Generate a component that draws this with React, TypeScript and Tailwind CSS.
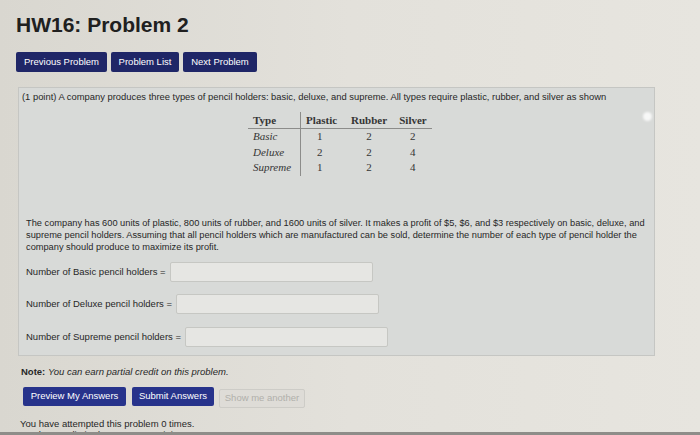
export default function App() {
  const rows = [
    ["Basic", "1", "2", "2"],
    ["Deluxe", "2", "2", "4"],
    ["Supreme", "1", "2", "4"],
  ];
  const inputs = [
    { label: "Number of Basic pencil holders =", mt: "mt-[9px]" },
    { label: "Number of Deluxe pencil holders =", mt: "mt-[12px]" },
    { label: "Number of Supreme pencil holders =", mt: "mt-[13px]" },
  ];
  return (
    <div className="relative h-[435px] w-[700px] overflow-hidden bg-gradient-to-r from-[#d9d7d0] via-[#e3e1db] to-[#e7e5df] pl-4 pt-[13px] text-[#272727] [font-family:'Liberation_Sans',Arial,sans-serif]">
      <h1 className="text-[21px] font-bold leading-[24px] text-[#202020]">HW16: Problem 2</h1>

      <div className="mt-[15px] flex gap-[4px]">
        <button className="h-[20px] w-[91px] rounded-[2px] bg-[#1f2667] text-[9.5px] text-white">Previous Problem</button>
        <button className="h-[20px] w-[68px] rounded-[2px] bg-[#1f2667] text-[9.5px] text-white">Problem List</button>
        <button className="h-[20px] w-[74px] rounded-[2px] bg-[#1f2667] text-[9.5px] text-white">Next Problem</button>
      </div>

      <div className="ml-[2px] mt-[15px] w-[637px] border border-[#c5c6c3] bg-[#d8dad8] pb-[8px] pt-[3px]">
        <p className="pl-[3px] text-[9.4px] leading-[12px] whitespace-nowrap">
          (1 point) A company produces three types of pencil holders: basic, deluxe, and supreme. All types require plastic, rubber, and silver as shown
        </p>

        <div className="ml-[229px] mt-[9px] grid w-[184px] grid-cols-[53px_43px_50px_38px] text-[11px] text-[#353535] [font-family:'Liberation_Serif','Times_New_Roman',serif]">
          <div className="h-[17px] border-b border-r border-[#8c8c8a] pl-[5px] font-bold leading-[16px]">Type</div>
          <div className="h-[17px] border-b border-[#8c8c8a] pl-[5px] font-bold leading-[16px]">Plastic</div>
          <div className="h-[17px] border-b border-[#8c8c8a] text-center font-bold leading-[16px]">Rubber</div>
          <div className="h-[17px] border-b border-[#8c8c8a] text-center font-bold leading-[16px]">Silver</div>
          {rows.map((r) => (
            <div key={r[0]} className="contents">
              <div className="h-[15.5px] border-r border-[#8c8c8a] pl-[5px] italic leading-[15px]">{r[0]}</div>
              <div className="h-[15.5px] pl-[16px] leading-[15px]">{r[1]}</div>
              <div className="h-[15.5px] text-center leading-[15px]">{r[2]}</div>
              <div className="h-[15.5px] pl-[16px] leading-[15px]">{r[3]}</div>
            </div>
          ))}
        </div>

        <p className="mt-[41px] pl-[7px] text-[9.25px] leading-[12px] whitespace-nowrap">
          <span className="block">The company has 600 units of plastic, 800 units of rubber, and 1600 units of silver. It makes a profit of $5, $6, and $3 respectively on basic, deluxe, and</span>
          <span className="block">supreme pencil holders. Assuming that all pencil holders which are manufactured can be sold, determine the number of each type of pencil holder the</span>
          <span className="block">company should produce to maximize its profit.</span>
        </p>

        {inputs.map((it) => (
          <div key={it.label} className={`${it.mt} flex items-center pl-[7px]`}>
            <span className="text-[9.5px] leading-[12px] whitespace-nowrap">{it.label}</span>
            <div className="ml-[4px] h-[20px] w-[203px] rounded-[2px] border border-[#c6c7c3] bg-[#e6e6e3]" />
          </div>
        ))}
      </div>

      <p className="ml-[5px] mt-[10px] text-[9.5px] leading-[12px]">
        <span className="font-bold">Note:</span> <span className="italic">You can earn partial credit on this problem.</span>
      </p>

      <div className="ml-[7px] mt-[9px] flex items-start gap-[6px]">
        <button className="h-[19px] w-[103px] rounded-[2px] bg-[#27338b] text-[9.5px] text-white">Preview My Answers</button>
        <button className="h-[19px] w-[82px] rounded-[2px] bg-[#27338b] text-[9.5px] text-white">Submit Answers</button>
        <button className="ml-[-1px] mt-[2px] h-[19px] w-[86px] rounded-[2px] border border-[#cdccc7] bg-[#dedcd7] text-[9.5px] text-[#b1b0ab]">Show me another</button>
      </div>

      <div className="ml-[4px] mt-[10px] text-[9.5px] leading-[11px]">
        <p>You have attempted this problem 0 times.</p>
        <p>You have unlimited attempts remaining.</p>
      </div>

      <div className="absolute left-[643px] top-[112px] h-[9px] w-[9px] rounded-full bg-white/80 blur-[1px]" />
      <div className="absolute bottom-0 left-0 h-[3px] w-full bg-[#8e8d89]" />
    </div>
  );
}
